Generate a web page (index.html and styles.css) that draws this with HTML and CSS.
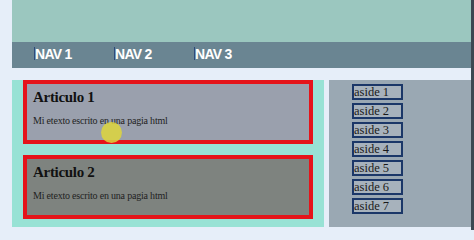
FILE: index.html
```html
<!DOCTYPE html>
<html lang="es">
<head>
<meta charset="utf-8">
<title>Pagina</title>
<link rel="stylesheet" href="styles.css">
</head>
<body>
<div class="page">
  <header class="header"></header>
  <nav class="nav">
    <a class="nav-link" href="#">NAV 1</a>
    <a class="nav-link" href="#">NAV 2</a>
    <a class="nav-link" href="#">NAV 3</a>
  </nav>
  <div class="content">
    <section class="main">
      <article class="article article-1">
        <h2 class="article-title">Articulo 1</h2>
        <p class="article-text">Mi etexto escrito en una pagia html</p>
      </article>
      <article class="article article-2">
        <h2 class="article-title">Articulo 2</h2>
        <p class="article-text">Mi etexto escrito en una pagia html</p>
      </article>
    </section>
    <aside class="aside">
      <div class="aside-item">aside 1</div>
      <div class="aside-item">aside 2</div>
      <div class="aside-item">aside 3</div>
      <div class="aside-item">aside 4</div>
      <div class="aside-item">aside 5</div>
      <div class="aside-item">aside 6</div>
      <div class="aside-item">aside 7</div>
    </aside>
  </div>
</div>
<div class="cursor-dot"></div>
</body>
</html>
```
FILE: styles.css
```css
html, body {
  margin: 0;
  padding: 0;
}
body {
  width: 474px;
  height: 230px;
  overflow: hidden;
  background: #e6eef9;
  box-sizing: border-box;
  border-right: 3px solid #3c4852;
  position: relative;
  font-family: "Liberation Serif", serif;
}
.page {
  padding-left: 12px;
}
.header {
  height: 42px;
  background: #9bc7bf;
}
.nav {
  height: 26px;
  background: #6a8592;
  display: flex;
  align-items: center;
  padding-left: 23px;
  padding-bottom: 3px;
  box-sizing: border-box;
}
.nav-link {
  width: 80px;
  color: #ffffff;
  text-decoration: none;
  font-family: "Liberation Sans", Arial, sans-serif;
  font-weight: bold;
  font-size: 14px;
  letter-spacing: -0.7px;
  line-height: 14px;
  position: relative;
}
.nav-link::before {
  content: "";
  position: absolute;
  left: -1px;
  top: 0;
  width: 1px;
  height: 13px;
  background: #2e4a7a;
}
.content {
  margin-top: 12px;
  display: flex;
  gap: 5px;
  height: 147px;
}
.main {
  width: 312px;
  background: #98e2d5;
  padding-left: 11px;
  box-sizing: border-box;
  display: flex;
  flex-direction: column;
  gap: 11px;
}
.article {
  width: 290px;
  height: 64px;
  box-sizing: border-box;
  border: 4px solid #e5141a;
  padding: 0 6px;
}
.article-1 {
  background: #9aa0ad;
}
.article-2 {
  background: #7e837f;
}
.article-title {
  margin: 0;
  padding-top: 6px;
  font-size: 15px;
  letter-spacing: -0.3px;
  line-height: 15px;
  font-weight: bold;
  color: #111111;
}
.article-text {
  margin: 10px 0 0;
  font-size: 10px;
  letter-spacing: -0.2px;
  line-height: 12px;
  color: #222222;
}
.aside {
  width: 142px;
  background: #9aa8b3;
  padding: 4px 0 0 23px;
  box-sizing: border-box;
  display: flex;
  flex-direction: column;
  gap: 3px;
}
.aside-item {
  width: 51px;
  height: 16px;
  box-sizing: border-box;
  border: 2px solid #1b3768;
  background: #a7b2bc;
  font-size: 12.5px;
  line-height: 13px;
  color: #1a1a1a;
  white-space: nowrap;
  overflow: hidden;
}
.cursor-dot {
  position: absolute;
  left: 101px;
  top: 122px;
  width: 21px;
  height: 21px;
  border-radius: 50%;
  background: rgba(222, 214, 60, 0.85);
}
```
